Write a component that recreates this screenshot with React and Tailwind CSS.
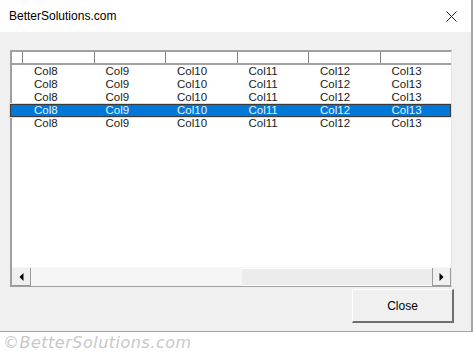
import React from 'react'

const cols = ['Col8', 'Col9', 'Col10', 'Col11', 'Col12', 'Col13']
const rows = [0, 1, 2, 3, 4]
const SELECTED = 3

function Arrow({ dir }) {
  return (
    <svg width="5" height="8" viewBox="0 0 5 8">
      {dir === 'left'
        ? <polygon points="4.5,0 4.5,8 0.5,4" fill="#000" />
        : <polygon points="0.5,0 0.5,8 4.5,4" fill="#000" />}
    </svg>
  )
}

export default function App() {
  return (
    <div className="w-[474px] h-[354px] bg-white overflow-hidden"
      style={{ fontFamily: '"Liberation Sans", Arial, sans-serif' }}>

      {/* Dialog window */}
      <div className="w-[473px] h-[332px] flex flex-col border-r-2 border-b border-[#a6a6a6]">

        {/* Title bar */}
        <div className="h-[32px] bg-white flex items-center justify-between pl-[9px] pr-[14px]">
          <span className="text-[12px] text-black">BetterSolutions.com</span>
          <svg width="11" height="11" viewBox="0 0 11 11">
            <path d="M0.5 0.5 L10.5 10.5 M10.5 0.5 L0.5 10.5" stroke="#222" strokeWidth="1" />
          </svg>
        </div>

        {/* Body */}
        <div className="flex-1 bg-[#f0f0f0] flex flex-col pl-[10px] pt-[18px]">

          {/* Listbox */}
          <div className="w-[442px] h-[237px] bg-white flex flex-col border-l-2 border-t-2 border-r border-b border-l-[#a0a0a0] border-t-[#a0a0a0] border-r-[#e6e6e6] border-b-[#a0a0a0]">

            {/* Header */}
            <div className="h-[13px] flex border-b-2 border-[#a0a0a0]">
              <div className="w-[11px] border-r border-[#808080]" />
              {cols.map((c, i) => (
                <div key={c}
                  className={i < cols.length - 1 ? 'w-[71.5px] border-r border-[#808080]' : 'flex-1'} />
              ))}
            </div>

            {/* Rows */}
            <div className="flex-1 flex flex-col">
              {rows.map(r => (
                <div key={r}
                  className={
                    r === SELECTED
                      ? 'h-[13px] flex items-center bg-[#0078d7] text-[#e8f2fc] border border-[#3a3a3a] outline outline-1 outline-[#f2d6bd] -ml-[2px]'
                      : 'h-[13px] flex items-center text-[#1a1a1a]'
                  }>
                  <div className={r === SELECTED ? 'w-[13px] shrink-0' : 'w-[12px] shrink-0'} />
                  {cols.map(c => (
                    <div key={c} className="w-[71.5px] shrink-0 pl-[10px] text-[11.5px] leading-[13px]">
                      {c}
                    </div>
                  ))}
                </div>
              ))}
            </div>

            {/* Horizontal scrollbar */}
            <div className="h-[19px] flex bg-[#f0f0f0] border-t border-[#f8f8f8]">
              <div className="w-[19px] flex items-center justify-center border-r border-b border-[#9a9a9a] bg-[#f0f0f0]">
                <Arrow dir="left" />
              </div>
              <div className="flex-1 bg-[#f6f6f6]" />
              <div className="w-[190px] bg-[#ececec] border-t border-white border-b border-[#a0a0a0]" />
              <div className="w-[19px] flex items-center justify-center border-l border-r border-b border-[#9a9a9a] bg-[#f0f0f0]">
                <Arrow dir="right" />
              </div>
            </div>
          </div>

          {/* Close button */}
          <div className="flex justify-end pr-[17px] mt-[2px]">
            <button className="w-[102px] h-[34px] bg-[#f0f0f0] border-t border-l border-white border-r-2 border-b-2 border-r-[#6e6e6e] border-b-[#6e6e6e] text-[12px] text-black">
              Close
            </button>
          </div>
        </div>
      </div>

      {/* Watermark */}
      <div className="pl-[3px] pt-[2px] text-[16px] italic tracking-[0.5px] text-[#c8c8c8] leading-[18px]"
        style={{ fontFamily: '"DejaVu Sans", sans-serif' }}>
        ©BetterSolutions.com
      </div>
    </div>
  )
}
